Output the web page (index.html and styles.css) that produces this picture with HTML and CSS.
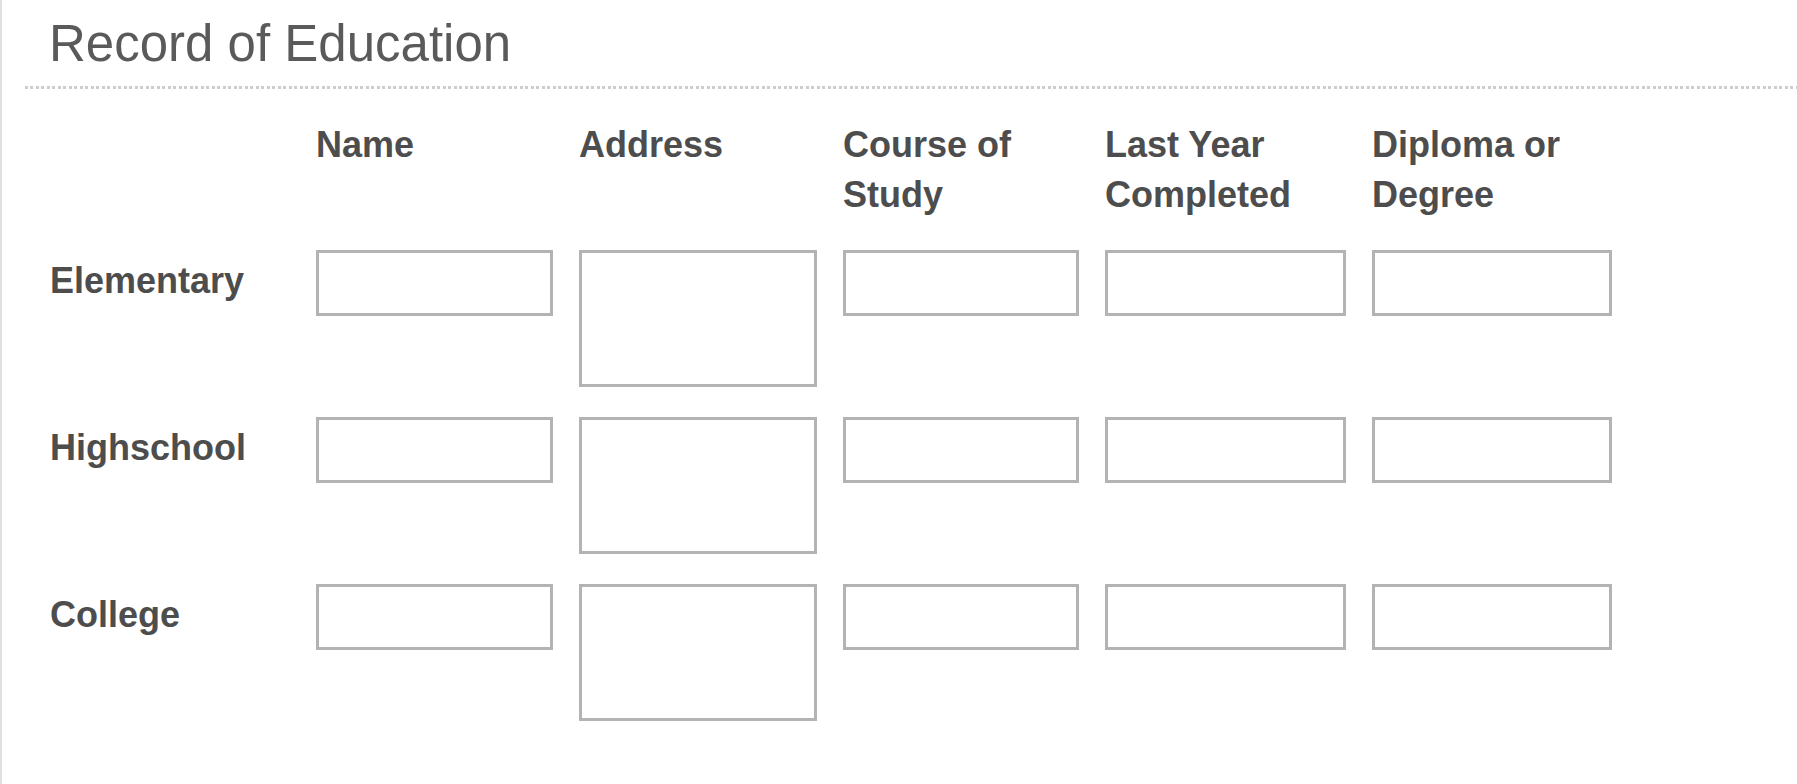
FILE: index.html
```html
<!DOCTYPE html>
<html lang="en">
<head>
<meta charset="utf-8">
<title>Record of Education</title>
<link rel="stylesheet" href="styles.css">
</head>
<body>
<div class="page">
  <h1 class="title">Record of Education</h1>
  <div class="rule"></div>
  <div class="grid">
    <div class="head"></div>
    <div class="head">Name</div>
    <div class="head">Address</div>
    <div class="head">Course of<br>Study</div>
    <div class="head">Last Year<br>Completed</div>
    <div class="head">Diploma or<br>Degree</div>

    <div class="label">Elementary</div>
    <div class="cell"><input class="field" type="text"></div>
    <div class="cell"><textarea class="field area"></textarea></div>
    <div class="cell"><input class="field" type="text"></div>
    <div class="cell"><input class="field" type="text"></div>
    <div class="cell"><input class="field" type="text"></div>

    <div class="label">Highschool</div>
    <div class="cell"><input class="field" type="text"></div>
    <div class="cell"><textarea class="field area"></textarea></div>
    <div class="cell"><input class="field" type="text"></div>
    <div class="cell"><input class="field" type="text"></div>
    <div class="cell"><input class="field" type="text"></div>

    <div class="label">College</div>
    <div class="cell"><input class="field" type="text"></div>
    <div class="cell"><textarea class="field area"></textarea></div>
    <div class="cell"><input class="field" type="text"></div>
    <div class="cell"><input class="field" type="text"></div>
    <div class="cell"><input class="field" type="text"></div>
  </div>
</div>
</body>
</html>
```

FILE: styles.css
```css
html, body {
  margin: 0;
  padding: 0;
  background: #ffffff;
}

.page {
  box-sizing: border-box;
  min-height: 784px;
  border-left: 2px solid #e0e0e0;
  padding-top: 14px;
  font-family: "Liberation Sans", Arial, sans-serif;
}

.title {
  margin: 0 0 0 47px;
  font-size: 51px;
  line-height: 60px;
  font-weight: 400;
  color: #5a5a5a;
}

.rule {
  margin: 12px 0 0 23px;
  height: 3px;
  background: repeating-linear-gradient(90deg, #cdcdcd 0 3px, transparent 3px 5.5px);
}

.grid {
  display: grid;
  grid-template-columns: 240px 237px 238px 236px 241px 240px;
  column-gap: 26px;
  row-gap: 30px;
  margin: 31px 0 0 48px;
  align-items: start;
}

.head {
  font-size: 36px;
  line-height: 50px;
  font-weight: 700;
  color: #4d4d4d;
  height: 100px;
}

.label {
  padding-top: 6px;
  font-size: 36px;
  line-height: 50px;
  font-weight: 700;
  color: #4d4d4d;
}

.cell {
  display: flex;
}

.field {
  box-sizing: border-box;
  display: block;
  width: 100%;
  height: 66px;
  margin: 0;
  padding: 0;
  border: 3px solid #b3b3b3;
  border-radius: 0;
  background: #ffffff;
  outline: none;
  font: inherit;
}

.area {
  height: 137px;
  resize: none;
}
```
